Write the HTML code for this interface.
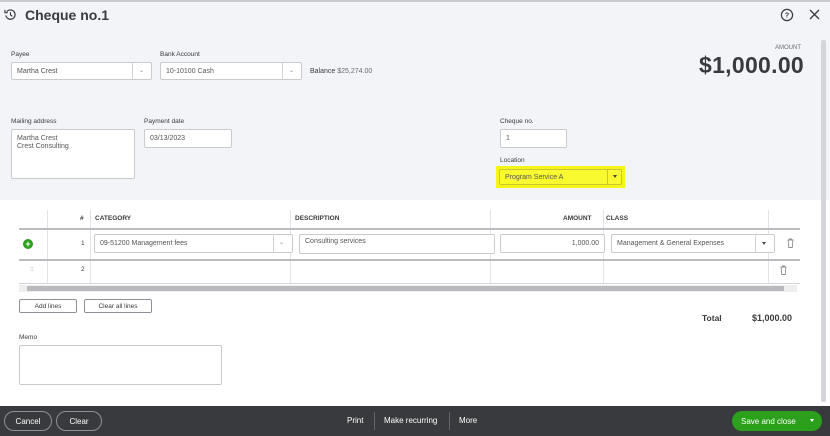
<!DOCTYPE html><html><head><style>
*{box-sizing:border-box;margin:0;padding:0}
body{width:830px;height:436px;overflow:hidden;font-family:"Liberation Sans",sans-serif;color:#393a3d;background:#fff;position:relative;font-size:7px}
.a{position:absolute}
.in{position:absolute;background:#fff;border:1px solid #c8cacd;border-radius:2px;font-size:7px;color:#555;padding:0 5px;display:flex;align-items:center}
.lb{position:absolute;font-size:6.5px;color:#393a3d}
.th{position:absolute;top:215px;font-size:6.5px;font-weight:bold;color:#393a3d}
.vl{position:absolute;width:1px;background:#e3e4e6}
.btn{position:absolute;border:1px solid #8d9096;border-radius:2px;background:#fff;font-size:6.5px;display:flex;align-items:center;justify-content:center}
</style></head><body>
<div class="a" style="left:0;top:0;width:830px;height:200px;background:#f3f4f8;border-top:2px solid #c9cacd"></div>
<svg class="a" style="left:4px;top:8px" width="13" height="13" viewBox="0 0 14 14"><path d="M3 4A5 5 0 1 1 2 8" fill="none" stroke="#393a3d" stroke-width="1.3"/><path d="M1 2v3h3" fill="none" stroke="#393a3d" stroke-width="1.2"/><path d="M7 4.5V7.5L9 9" fill="none" stroke="#393a3d" stroke-width="1.2"/></svg>
<div class="a" style="left:25px;top:7px;font-size:14px;font-weight:bold">Cheque no.1</div>
<svg class="a" style="left:780px;top:8px" width="14" height="14" viewBox="0 0 14 14"><circle cx="7" cy="7" r="5.6" fill="none" stroke="#393a3d" stroke-width="1.2"/><text x="7" y="9.6" font-size="7" text-anchor="middle" font-family="Liberation Sans" font-weight="bold" fill="#393a3d">?</text></svg>
<svg class="a" style="left:809px;top:9px" width="11" height="11" viewBox="0 0 11 11"><path d="M1 1L10 10M10 1L1 10" stroke="#393a3d" stroke-width="1.3"/></svg>
<div class="a" style="left:775px;top:45px;font-size:6px;color:#6b6c72">AMOUNT</div>
<div class="a" style="left:699px;top:52px;font-size:23px;font-weight:bold;letter-spacing:0.3px">$1,000.00</div>
<div class="a" style="left:821px;top:40px;width:5px;height:362px;background:#d4d5d8;border-radius:2px"></div>

<div class="lb" style="left:11px;top:51px">Payee</div>
<div class="in" style="left:11px;top:62px;width:141px;height:18px">Martha Crest</div>
<div class="a" style="left:132px;top:62px;width:1px;height:18px;background:#d0d1d4"></div>
<div class="a" style="left:139px;top:67px;font-size:6px;color:#888">⌄</div>
<div class="lb" style="left:160px;top:51px">Bank Account</div>
<div class="in" style="left:160px;top:62px;width:142px;height:18px">10-10100 Cash</div>
<div class="a" style="left:282px;top:62px;width:1px;height:18px;background:#d0d1d4"></div>
<div class="a" style="left:289px;top:67px;font-size:6px;color:#888">⌄</div>
<div class="a" style="left:310px;top:68px;font-size:7px"><span style="color:#393a3d">Balance</span> <span style="color:#6b6c72">$25,274.00</span></div>

<div class="lb" style="left:11px;top:118px">Mailing address</div>
<div class="in" style="left:11px;top:129px;width:124px;height:50px;align-items:flex-start;padding-top:5px;line-height:8px">Martha Crest<br>Crest Consulting</div>
<div class="lb" style="left:144px;top:118px">Payment date</div>
<div class="in" style="left:144px;top:129px;width:88px;height:19px">03/13/2023</div>
<div class="lb" style="left:500px;top:118px">Cheque no.</div>
<div class="in" style="left:500px;top:129px;width:67px;height:19px">1</div>
<div class="lb" style="left:500px;top:157px">Location</div>
<div class="a" style="left:496px;top:166px;width:129px;height:22px;background:#f5f51a"></div>
<div class="in" style="left:499px;top:169px;width:123px;height:16px;background:#fafa30;border-color:#c9c730;color:#555">Program Service A</div>
<div class="a" style="left:607px;top:169px;width:1px;height:16px;background:#c9c730"></div>
<div class="a" style="left:613px;top:175px;border-left:2.5px solid transparent;border-right:2.5px solid transparent;border-top:3px solid #444"></div>

<div class="vl" style="left:47px;top:210px;height:73px"></div>
<div class="vl" style="left:90px;top:210px;height:73px"></div>
<div class="vl" style="left:290px;top:210px;height:73px"></div>
<div class="vl" style="left:490px;top:210px;height:73px"></div>
<div class="vl" style="left:603px;top:210px;height:73px"></div>
<div class="vl" style="left:768px;top:210px;height:73px"></div>
<div class="th" style="left:80px">#</div>
<div class="th" style="left:95px">CATEGORY</div>
<div class="th" style="left:295px">DESCRIPTION</div>
<div class="th" style="left:563px">AMOUNT</div>
<div class="th" style="left:606px">CLASS</div>
<div class="a" style="left:19px;top:228px;width:781px;height:2px;background:#babcc0"></div>
<div class="a" style="left:23px;top:239px;width:10px;height:10px;border-radius:50%;background:#2ca01c;color:#fff;font-size:9px;font-weight:bold;line-height:10px;text-align:center">+</div>
<div class="a" style="left:81px;top:240px;font-size:6.5px">1</div>
<div class="in" style="left:94px;top:234px;width:199px;height:19px">09-51200 Management fees</div>
<div class="a" style="left:273px;top:234px;width:1px;height:19px;background:#d0d1d4"></div>
<div class="a" style="left:279px;top:239px;font-size:6px;color:#888">⌄</div>
<div class="in" style="left:299px;top:234px;width:196px;height:20px;align-items:flex-start;padding-top:3px">Consulting services</div>
<div class="in" style="left:500px;top:234px;width:105px;height:19px;justify-content:flex-end">1,000.00</div>
<div class="in" style="left:611px;top:234px;width:164px;height:19px">Management &amp; General Expenses</div>
<div class="a" style="left:755px;top:234px;width:1px;height:19px;background:#d0d1d4"></div>
<div class="a" style="left:762px;top:242px;border-left:2.5px solid transparent;border-right:2.5px solid transparent;border-top:3px solid #444"></div>
<svg class="a" style="left:787px;top:238px" width="7" height="10" viewBox="0 0 7 10"><path d="M0.5 2h6M2.5 2V1h2v1M1.2 2.5l.5 7h3.6l.5-7" fill="none" stroke="#8d9096" stroke-width=".9"/></svg>
<div class="a" style="left:19px;top:259px;width:781px;height:2px;background:#babcc0"></div>
<div class="a" style="left:30px;top:266px;font-size:6px;color:#aaa">⁝⁝</div>
<div class="a" style="left:81px;top:266px;font-size:6.5px">2</div>
<svg class="a" style="left:780px;top:265px" width="7" height="10" viewBox="0 0 7 10"><path d="M0.5 2h6M2.5 2V1h2v1M1.2 2.5l.5 7h3.6l.5-7" fill="none" stroke="#8d9096" stroke-width=".9"/></svg>
<div class="a" style="left:19px;top:283px;width:781px;height:1px;background:#d4d5d8"></div>
<div class="a" style="left:19px;top:285px;width:778px;height:7px;background:#eee"></div>
<div class="a" style="left:27px;top:286px;width:757px;height:5px;background:#b9babd"></div>

<div class="btn" style="left:19px;top:299px;width:58px;height:14px">Add lines</div>
<div class="btn" style="left:84px;top:299px;width:68px;height:14px">Clear all lines</div>
<div class="a" style="left:702px;top:313px;font-size:8.5px;font-weight:bold">Total</div>
<div class="a" style="left:752px;top:313px;font-size:9px;font-weight:bold">$1,000.00</div>
<div class="lb" style="left:19px;top:334px">Memo</div>
<div class="in" style="left:19px;top:345px;width:203px;height:40px"></div>

<div class="a" style="left:0;top:406px;width:830px;height:30px;background:#393a3d"></div>
<div class="a" style="left:4px;top:411px;width:48px;height:20px;border:1px solid #8d9096;border-radius:10px;color:#fff;font-size:8px;display:flex;align-items:center;justify-content:center">Cancel</div>
<div class="a" style="left:56px;top:411px;width:46px;height:20px;border:1px solid #8d9096;border-radius:10px;color:#fff;font-size:8px;display:flex;align-items:center;justify-content:center">Clear</div>
<div class="a" style="left:347px;top:416px;color:#fff;font-size:8px">Print</div>
<div class="a" style="left:374px;top:412px;width:1px;height:18px;background:#666"></div>
<div class="a" style="left:384px;top:416px;color:#fff;font-size:8px">Make recurring</div>
<div class="a" style="left:449px;top:412px;width:1px;height:18px;background:#666"></div>
<div class="a" style="left:459px;top:416px;color:#fff;font-size:8px">More</div>
<div class="a" style="left:732px;top:411px;width:90px;height:20px;border-radius:10px;background:#2ca01c;color:#fff;font-size:8px;display:flex;align-items:center;padding-left:9px">Save and close</div>
<div class="a" style="left:810px;top:419px;border-left:2.5px solid transparent;border-right:2.5px solid transparent;border-top:3px solid #fff"></div>
</body></html>
